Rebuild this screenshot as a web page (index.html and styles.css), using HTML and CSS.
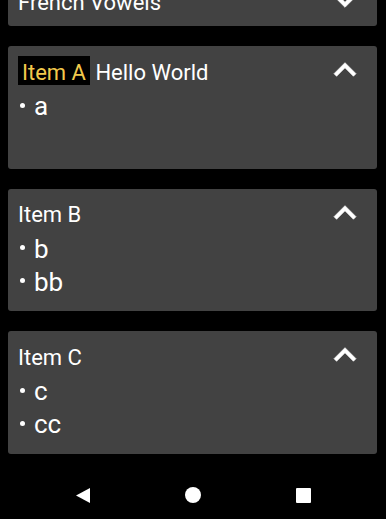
FILE: index.html
```html
<!DOCTYPE html>
<html>
<head>
<meta charset="utf-8">
<link rel="stylesheet" href="styles.css">
</head>
<body>
<div class="screen">
  <div class="scroll">
    <div class="list">
      <div class="card collapsed">
        <div class="head">
          <div class="title">French Vowels</div>
          <svg class="chev" viewBox="0 0 24 24"><path d="M16.59 8.59L12 13.17 7.41 8.59 6 10l6 6 6-6z"/></svg>
        </div>
      </div>
      <div class="card expanded">
        <div class="head">
          <div class="title"><span class="hl">Item A</span> Hello World</div>
          <svg class="chev" viewBox="0 0 24 24"><path d="M12 8l-6 6 1.41 1.41L12 10.83l4.59 4.58L18 14z"/></svg>
        </div>
        <ul class="items">
          <li><span class="dot"></span>a</li>
        </ul>
      </div>
      <div class="card expanded">
        <div class="head">
          <div class="title">Item B</div>
          <svg class="chev" viewBox="0 0 24 24"><path d="M12 8l-6 6 1.41 1.41L12 10.83l4.59 4.58L18 14z"/></svg>
        </div>
        <ul class="items">
          <li><span class="dot"></span>b</li>
          <li><span class="dot"></span>bb</li>
        </ul>
      </div>
      <div class="card expanded">
        <div class="head">
          <div class="title">Item C</div>
          <svg class="chev" viewBox="0 0 24 24"><path d="M12 8l-6 6 1.41 1.41L12 10.83l4.59 4.58L18 14z"/></svg>
        </div>
        <ul class="items">
          <li><span class="dot"></span>c</li>
          <li><span class="dot"></span>cc</li>
        </ul>
      </div>
    </div>
  </div>
  <nav class="navbar">
    <div class="slot"><svg class="back" viewBox="0 0 14 15"><polygon points="14,0 14,15 0,7.5"/></svg></div>
    <div class="slot"><span class="home"></span></div>
    <div class="slot"><span class="recent"></span></div>
  </nav>
</div>
</body>
</html>
```

FILE: styles.css
```css
html, body {
  margin: 0;
  padding: 0;
  background: #000;
}

.screen {
  height: 519px;
  display: flex;
  flex-direction: column;
  font-family: Roboto, "Noto Sans", "Liberation Sans", sans-serif;
  color: #fff;
  overflow: hidden;
}

.scroll {
  flex: 1;
  overflow: hidden;
}

.list {
  display: flex;
  flex-direction: column;
  gap: 20px;
  padding: 0 9px 0 8px;
  margin-top: -24px;
}

.card {
  background: #424242;
  border-radius: 3px;
  padding: 2px 10px 4px 10px;
  box-sizing: border-box;
}

.card.expanded {
  height: 122.5px;
}

.head {
  display: flex;
  justify-content: space-between;
  align-items: flex-start;
}

.title {
  margin-top: 11.5px;
  font-size: 22px;
  line-height: 26px;
  white-space: nowrap;
}

.hl {
  background: #000;
  color: #f2c94c;
  padding: 4px 4px 0 4px;
}

.chev {
  width: 44px;
  height: 44px;
  fill: #fff;
  stroke: #fff;
  stroke-width: 0.35;
  stroke-linejoin: round;
  flex: none;
}

.items {
  list-style: none;
  margin: -2px 0 0 0;
  padding: 0;
  font-size: 26px;
  line-height: 33px;
}

.items li {
  display: flex;
  align-items: center;
}

.dot {
  width: 5px;
  height: 5px;
  border-radius: 50%;
  background: #fff;
  margin: 0 9px 3px 2px;
  flex: none;
}

.navbar {
  height: 48px;
  flex: none;
  display: flex;
  justify-content: center;
  align-items: center;
  background: #000;
}

.slot {
  width: 110px;
  display: flex;
  justify-content: center;
  align-items: center;
}

.back {
  width: 14px;
  height: 15px;
  fill: #fff;
}

.home {
  width: 16px;
  height: 16px;
  border-radius: 50%;
  background: #fff;
}

.recent {
  width: 15px;
  height: 15px;
  background: #fff;
  border-radius: 1px;
}
```
